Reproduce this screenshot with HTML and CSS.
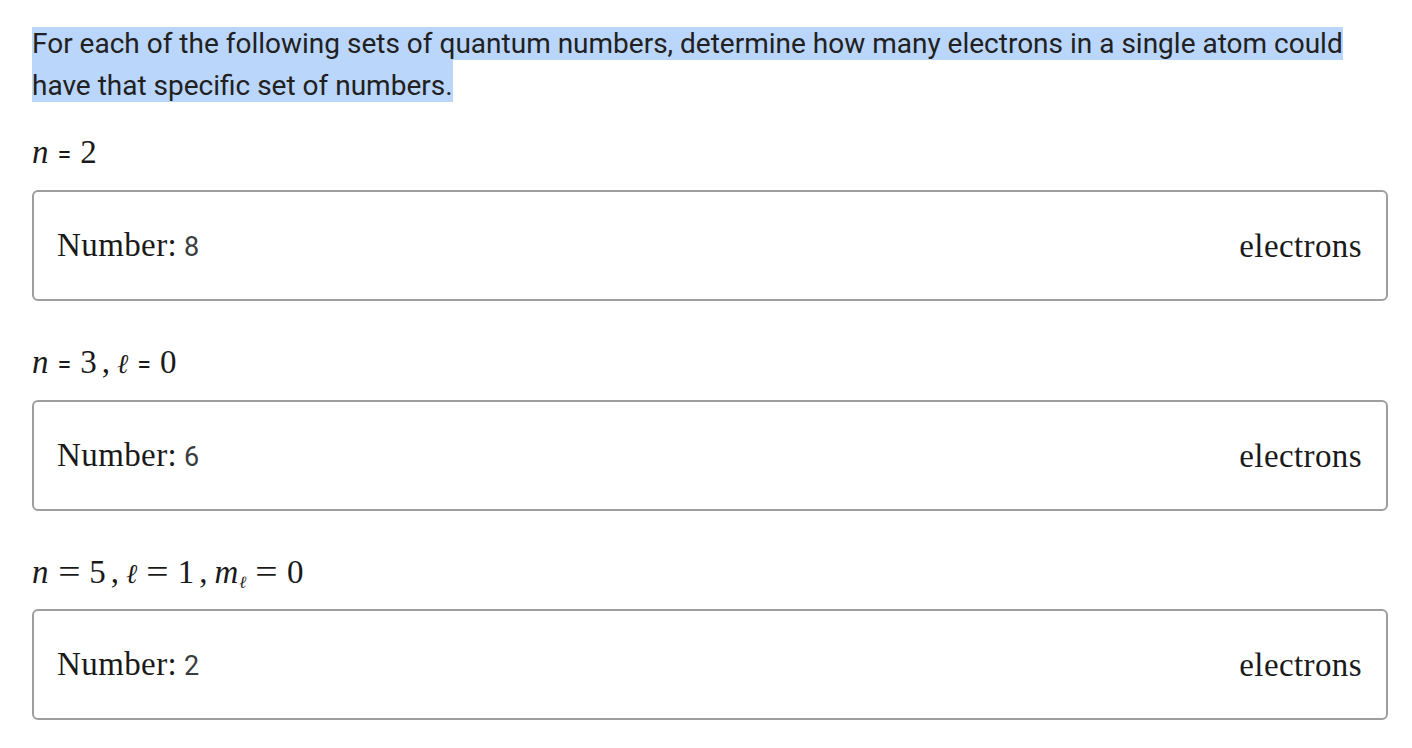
FILE: index.html
```html
<!DOCTYPE html>
<html lang="en">
<head>
<meta charset="utf-8">
<title>Quantum numbers</title>
<link rel="stylesheet" href="styles.css">
</head>
<body>
<main class="page">
  <p class="intro"><span class="sel">For each of the following sets of quantum numbers, determine how many electrons in a single atom could</span> <span class="sel sel-2">have that specific set of numbers.</span></p>

  <section class="item">
    <div class="label"><span class="mi">n</span><span class="eq">=</span><span class="mn">2</span></div>
    <div class="answer">
      <div class="field"><span class="tx">Number:</span><span class="val">8</span></div>
      <span class="tx">electrons</span>
    </div>
  </section>

  <section class="item">
    <div class="label"><span class="mi">n</span><span class="eq">=</span><span class="mn">3</span><span class="mp">,</span><span class="mi ell">ℓ</span><span class="eq">=</span><span class="mn">0</span></div>
    <div class="answer">
      <div class="field"><span class="tx">Number:</span><span class="val">6</span></div>
      <span class="tx">electrons</span>
    </div>
  </section>

  <section class="item">
    <div class="label katex"><span class="mi">n</span><span class="mo">=</span><span class="mn">5</span><span class="mp">,</span><span class="mi ell">ℓ</span><span class="mo">=</span><span class="mn">1</span><span class="mp">,</span><span class="mi">m<sub class="sub">ℓ</sub></span><span class="mo">=</span><span class="mn">0</span></div>
    <div class="answer">
      <div class="field"><span class="tx">Number:</span><span class="val">2</span></div>
      <span class="tx">electrons</span>
    </div>
  </section>
</main>
</body>
</html>
```

FILE: styles.css
```css
html, body {
  margin: 0;
  padding: 0;
  background: #ffffff;
}

body {
  font-family: Roboto, "Liberation Sans", Arial, sans-serif;
  font-size: 28px;
  line-height: 42px;
  color: #212121;
}

.page {
  display: flex;
  flex-direction: column;
  padding: 23px 24px 0 32px;
}

.intro {
  margin: 0;
}

.sel {
  background: #bbd6fb;
}

.sel-2 {
  padding-top: 10px;
}

.item {
  display: flex;
  flex-direction: column;
  gap: 14px;
  margin-top: 24px;
}

.item + .item {
  margin-top: 40px;
}

.label {
  display: flex;
  align-items: baseline;
  white-space: nowrap;
}

.mi, .mn, .mp, .mo, .tx {
  font-family: "Liberation Serif", "Times New Roman", serif;
  font-size: 33px;
  color: #1a1a1a;
}

.mi {
  font-style: italic;
}

.ell {
  font-family: "DejaVu Serif", serif;
  font-size: 27px;
  font-style: italic;
}

.eq {
  font-size: 25px;
  color: #1a1a1a;
  margin: 0 9px;
}

.mp {
  margin: 0 7px 0 5px;
}

.katex .mo {
  margin: 0 11px;
  transform: scaleX(1.2);
}

.sub {
  font-family: "DejaVu Serif", serif;
  font-size: 17px;
  font-style: italic;
  vertical-align: -5px;
  margin-left: 1px;
  line-height: 0;
}

.answer {
  display: flex;
  align-items: center;
  justify-content: space-between;
  box-sizing: border-box;
  height: 111px;
  padding: 0 24px 0 23px;
  border: 2px solid #9e9e9e;
  border-radius: 6px;
}

.field {
  display: flex;
  align-items: baseline;
  gap: 7px;
}

.tx {
  letter-spacing: 0.4px;
}

.val {
  font-family: Roboto, "Liberation Sans", sans-serif;
  font-size: 27px;
  color: #3a3d40;
}
```
